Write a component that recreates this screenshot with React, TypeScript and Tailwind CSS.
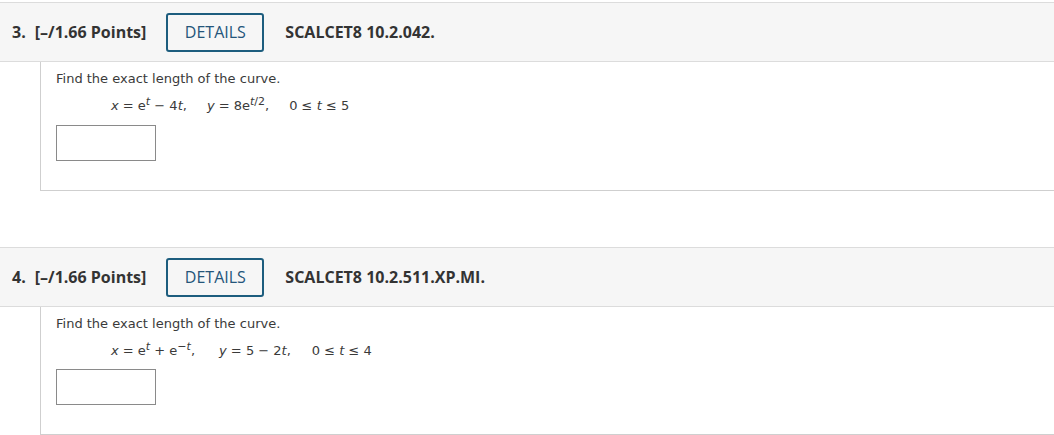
import React from 'react';

interface QuestionProps {
  num: number;
  code: string;
  last?: boolean;
  children: React.ReactNode;
}

function Question({ num, code, last, children }: QuestionProps) {
  return (
    <div>
      {/* Header bar */}
      <div className="flex h-[60px] items-center border-y border-[#dcdcdc] bg-[#f6f6f6] pl-[12px] font-['Open_Sans',sans-serif] text-[16px] font-bold text-[#333]">
        <span>{num}.</span>
        <span className="ml-[9px]">[–/1.66 Points]</span>
        <button className="ml-[20px] h-[39px] w-[98px] rounded-[3px] border-2 border-[#1d5d7e] text-[16px] font-normal text-[#24557a]">
          DETAILS
        </button>
        <span className="ml-[21px]">{code}</span>
      </div>

      {/* Body */}
      <div className="ml-[40px] border-b border-l border-[#cfcfcf] pb-[29px] pl-[15px] pt-[8px] font-['DejaVu_Sans',Verdana,sans-serif] text-[13px] text-[#3a3a3a]">
        <p className="leading-[18px]">Find the exact length of the curve.</p>
        <div className="ml-[55px] mt-[9px] flex items-center leading-[18px]">{children}</div>
        <div className={`h-[36px] w-[100px] border border-[#8a8a8a] bg-white ${last ? 'mt-[9px]' : 'mt-[10px]'}`} />
      </div>
    </div>
  );
}

export default function App() {
  return (
    <div className="h-[435px] w-[1054px] overflow-hidden bg-white pt-[2px]">
      <Question num={3} code="SCALCET8 10.2.042.">
        <span>
          <i>x</i> = e<sup className="text-[11px]"><i>t</i></sup> − 4<i>t</i>,
        </span>
        <span className="ml-[20px]">
          <i>y</i> = 8e<sup className="text-[11px]"><i>t</i>/2</sup>,
        </span>
        <span className="ml-[20px]">
          0 ≤ <i>t</i> ≤ 5
        </span>
      </Question>

      <div className="h-[56px]" />

      <Question num={4} code="SCALCET8 10.2.511.XP.MI." last>
        <span>
          <i>x</i> = e<sup className="text-[11px]"><i>t</i></sup> + e<sup className="text-[11px]">−<i>t</i></sup>,
        </span>
        <span className="ml-[24px]">
          <i>y</i> = 5 − 2<i>t</i>,
        </span>
        <span className="ml-[21px]">
          0 ≤ <i>t</i> ≤ 4
        </span>
      </Question>
    </div>
  );
}
